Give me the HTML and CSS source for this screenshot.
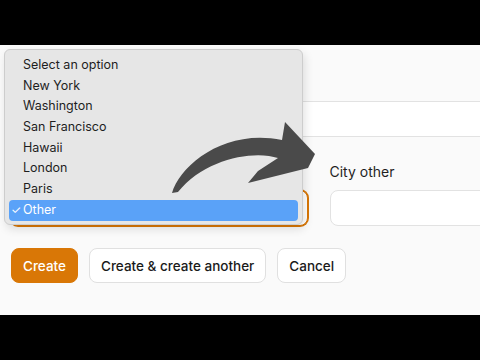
FILE: index.html
```html
<!DOCTYPE html>
<html lang="en">
<head>
  <meta charset="UTF-8">
  <meta name="viewport" content="width=device-width, initial-scale=1.0">
  <title>Create City</title>
  <link rel="stylesheet" href="styles.css">
</head>
<body>

<div class="screen">
  <form class="form">
    <div class="field">
      <!-- label hidden under the popup -->
      <div class="label"></div>
      <div class="input"></div>
    </div>

    <div class="grid">
      <div class="field">
        <div class="label"></div>
        <div class="input focused"></div>
      </div>
      <div class="field">
        <label class="label">City other</label>
        <div class="input"></div>
      </div>
    </div>

    <div class="actions">
      <button type="button" class="btn btn-primary">Create</button>
      <button type="button" class="btn">Create &amp; create another</button>
      <button type="button" class="btn">Cancel</button>
    </div>
  </form>

  <!-- Native select popup -->
  <ul class="menu">
    <li>Select an option</li>
    <li>New York</li>
    <li>Washington</li>
    <li>San Francisco</li>
    <li>Hawaii</li>
    <li>London</li>
    <li>Paris</li>
    <li class="selected"><span class="check">✓</span>Other</li>
  </ul>

  <!-- Big pointer arrow -->
  <svg class="arrow" width="480" height="270" viewBox="0 45 480 270">
    <path d="M172,193 C180,165 225,128 282,140 L285,122 L315,154 L308,168 L248,183 L258,171 L278,158 C255,150 205,158 178,192 Z" fill="#4a4a4a"/>
  </svg>
</div>

</body>
</html>
```

FILE: styles.css
```css
/* Letterboxed screenshot of a form */
body {
  margin: 0;
  background-color: #000;
  font-family: Inter, "Noto Sans", sans-serif;
}

.screen {
  position: relative;
  margin-top: 45px;
  height: 270px;
  background-color: #fafafa;
  overflow: hidden;
}

.form {
  width: 617px;
  padding: 28px 0 0 10px;
}

.field {
  display: flex;
  flex-direction: column;
  gap: 8px;
}

.label {
  height: 20px;
  font-size: 14px;
  line-height: 20px;
  color: #1f1f1f;
}

.input {
  height: 34px;
  background-color: #fff;
  border: 1px solid #e2e2e2;
  border-radius: 8px;
}

.focused {
  border-color: #d97706;
  box-shadow: 0 0 0 1px #d97706;
}

.grid {
  display: grid;
  grid-template-columns: 1fr 1fr;
  gap: 22px;
  margin-top: 25px;
}

.actions {
  display: flex;
  gap: 11px;
  margin-top: 22px;
  padding-left: 1px;
}

.btn {
  height: 35px;
  padding: 0 11px;
  background-color: #fff;
  border: 1px solid #e0e0e0;
  border-radius: 8px;
  font-family: inherit;
  font-size: 13.5px;
  font-weight: 500;
  color: #1a1a1a;
}

.btn-primary {
  background-color: #d97706;
  border-color: #d97706;
  color: #fff;
}

.menu {
  position: absolute;
  top: 4px;
  left: 4px;
  width: 289px;
  margin: 0;
  padding: 5px 4px 3px;
  list-style: none;
  background-color: #e6e6e6;
  border: 1px solid #cdcdcd;
  border-radius: 6px;
  box-shadow: 2px 4px 10px rgba(0, 0, 0, 0.12);
  font-size: 12.5px;
  color: #1e1e1e;
}

.menu li {
  position: relative;
  height: 20.7px;
  line-height: 20.7px;
  padding-left: 14px;
  border-radius: 4px;
}

.menu .selected {
  background-color: #5aa2f8;
  color: #fff;
}

.check {
  position: absolute;
  left: 2px;
  font-size: 11.5px;
}

.arrow {
  position: absolute;
  top: 0;
  left: 0;
}
```
